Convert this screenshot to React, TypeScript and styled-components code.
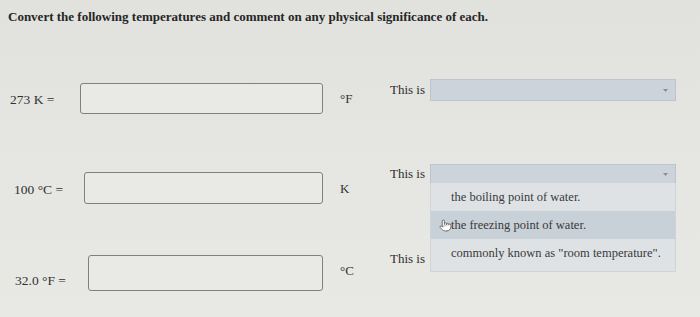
import React from "react";
import styled, { createGlobalStyle } from "styled-components";
import { Pointer } from "lucide-react";

const GlobalStyle = createGlobalStyle`
  html, body {
    margin: 0;
    padding: 0;
    background: #e4e4e0;
  }
  body {
    font-family: "Liberation Serif", "Times New Roman", serif;
    color: #2b2b2b;
  }
`;

const Page = styled.div`
  width: 700px;
  height: 317px;
  overflow: hidden;
  background: linear-gradient(180deg, #e1e1dd 0%, #e6e6e2 60%, #e8e8e4 100%);
  position: relative;
`;

const Title = styled.div`
  padding: 9px 0 0 8px;
  font-size: 13px;
  font-weight: bold;
  color: #262626;
  height: 21px;
`;

const Rows = styled.div`
  display: grid;
  grid-auto-rows: 85px;
  padding-top: 49px;
`;

const Row = styled.div<{ $front?: boolean }>`
  display: flex;
  align-items: flex-start;
  position: relative;
  z-index: ${(p) => (p.$front ? 5 : 1)};
`;

const LeftGroup = styled.div<{ $top: number }>`
  display: flex;
  align-items: center;
  width: 390px;
  margin-top: ${(p) => p.$top}px;
`;

const Label = styled.div<{ $w: number; $pad: number; $drop: number }>`
  width: ${(p) => p.$w}px;
  padding-left: ${(p) => p.$pad}px;
  box-sizing: border-box;
  font-size: 13.5px;
  color: #333;
  position: relative;
  top: ${(p) => p.$drop}px;
`;

const Input = styled.div<{ $w: number; $h: number }>`
  width: ${(p) => p.$w}px;
  height: ${(p) => p.$h}px;
  box-sizing: border-box;
  border: 1.5px solid #808080;
  border-radius: 3px;
  background: #e9e9e5;
`;

const Unit = styled.div<{ $drop: number }>`
  width: 50px;
  padding-left: 17px;
  box-sizing: border-box;
  font-size: 13px;
  color: #333;
  position: relative;
  top: ${(p) => p.$drop}px;
`;

const RightGroup = styled.div`
  display: flex;
  align-items: center;
  gap: 6px;
  position: relative;
`;

const ThisIs = styled.div`
  width: 34px;
  font-size: 13px;
  color: #2e2e2e;
  white-space: nowrap;
`;

const Select = styled.div<{ $h: number }>`
  width: 246px;
  height: ${(p) => p.$h}px;
  box-sizing: border-box;
  background: #ccd3da;
  border: 1px solid #bcc5cd;
  display: flex;
  align-items: center;
  justify-content: flex-end;
  padding-right: 7px;
  position: relative;
`;

const Menu = styled.div`
  position: absolute;
  top: 100%;
  left: -1px;
  width: 246px;
  box-sizing: border-box;
  background: #dee2e5;
  border: 1px solid #cfd4d7;
  border-top: none;
  padding-bottom: 4px;
`;

const MenuItem = styled.div<{ $active?: boolean }>`
  height: 28px;
  display: flex;
  align-items: center;
  padding-left: 20px;
  font-size: 12.5px;
  color: #3a3a3a;
  background: ${(p) => (p.$active ? "#c8d0d8" : "transparent")};
  position: relative;
  white-space: nowrap;
`;

const Cursor = styled.span`
  position: absolute;
  left: 8px;
  top: 8px;
  display: flex;
`;

const Caret = () => (
  <svg width="5" height="3" viewBox="0 0 5 3">
    <path d="M0 0 L5 0 L2.5 3 Z" fill="#8a8f94" />
  </svg>
);

const rows = [
  { label: "273 K =", w: 80, pad: 10, top: 4, h: 31, unit: "°F", ld: 1, ud: 0, sel: 22 },
  { label: "100 °C =", w: 84, pad: 14, top: 8, h: 32, unit: "K", ld: 2, ud: 1, sel: 20, open: true },
  { label: "32.0 °F =", w: 88, pad: 15, top: 6, h: 36, unit: "°C", ld: 8, ud: -2, sel: 20 },
];

export default function App() {
  return (
    <Page>
      <GlobalStyle />
      <Title>
        Convert the following temperatures and comment on any physical
        significance of each.
      </Title>
      <Rows>
        {rows.map((r) => (
          <Row key={r.label} $front={r.open}>
            <LeftGroup $top={r.top}>
              <Label $w={r.w} $pad={r.pad} $drop={r.ld}>
                {r.label}
              </Label>
              <Input $w={323 - r.w} $h={r.h} />
              <Unit $drop={r.ud}>{r.unit}</Unit>
            </LeftGroup>
            <RightGroup>
              <ThisIs>This is</ThisIs>
              <Select $h={r.sel}>
                <Caret />
                {r.open && (
                  <Menu>
                    <MenuItem>the boiling point of water.</MenuItem>
                    <MenuItem $active>
                      <Cursor>
                        <Pointer size={13} color="#555" fill="#ffffff" strokeWidth={1.5} />
                      </Cursor>
                      the freezing point of water.
                    </MenuItem>
                    <MenuItem>commonly known as "room temperature".</MenuItem>
                  </Menu>
                )}
              </Select>
            </RightGroup>
          </Row>
        ))}
      </Rows>
    </Page>
  );
}
